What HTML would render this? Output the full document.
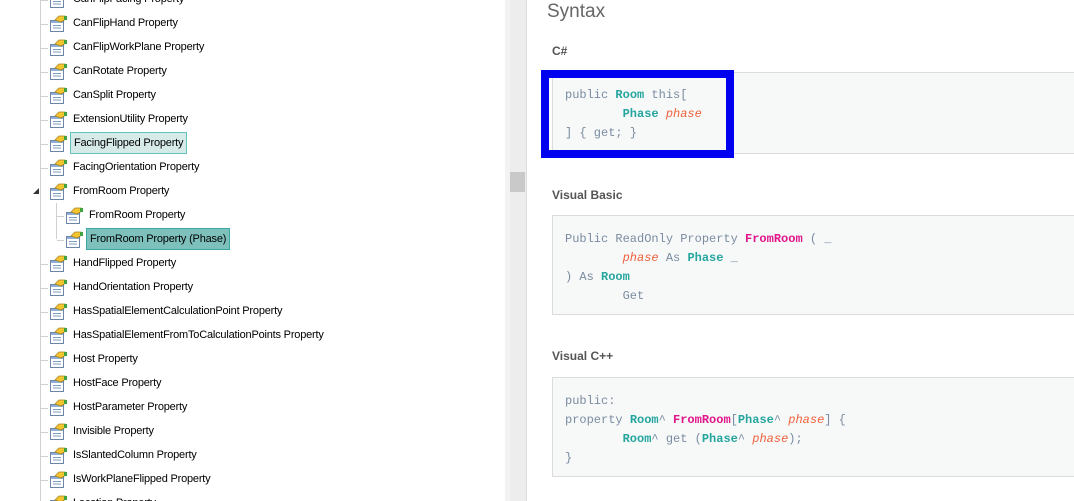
<!DOCTYPE html>
<html><head><meta charset="utf-8"><style>
*{margin:0;padding:0;box-sizing:border-box}
html,body{width:1074px;height:501px;overflow:hidden}
body{background:#fff;position:relative;font-family:"Liberation Sans",sans-serif}
.row{position:absolute;height:24px;font-size:11px;letter-spacing:-0.2px;color:#000;line-height:24px;white-space:nowrap}
.ic{position:absolute;top:4px;width:18px;height:18px}
.t{position:absolute;top:0;padding:0 3px}
.hl1{background:#d6ebe8;border:1px solid #62c2bd;line-height:20px;top:1px}
.hl2{background:#7dc0bc;border:1px solid #3ba9a3;line-height:20px;top:1px}
.hline{position:absolute;height:1px;background:#d0d0d0}
.vline{position:absolute;width:1px;background:#d0d0d0}
.code{position:absolute;left:552px;width:540px;background:#f7f9f9;border:1px solid #dcdcdc;font-family:"Liberation Mono",monospace;font-size:12px;line-height:19px;color:#7a8ba0;padding:14px 12px;white-space:pre}
.k{color:#26a59f;font-weight:bold}
.p{color:#ee5f3a;font-style:italic}
.m{color:#e0168a;font-weight:bold}
.h{position:absolute;left:552px;font-size:12px;font-weight:bold;color:#555}
</style></head><body>
<div style="position:absolute;left:505px;top:0;width:5px;height:501px;background:#f3f3f3"></div>
<div style="position:absolute;left:510px;top:0;width:16px;height:501px;background:#ededed"></div>
<div style="position:absolute;left:510px;top:172px;width:15px;height:20px;background:#c9c9c9"></div>
<div style="position:absolute;left:526px;top:0;width:1px;height:501px;background:#dcdcdc"></div>

<svg width="0" height="0" style="position:absolute"><defs>
<g id="icon"><rect x="1.5" y="5.5" width="13" height="11" fill="#fff" stroke="#6d86a8"/><rect x="2" y="6" width="12" height="2" fill="#8fb0d6"/><line x1="4" y1="10.5" x2="12" y2="10.5" stroke="#7c9cc4"/><line x1="4" y1="13" x2="12" y2="13" stroke="#7c9cc4"/><path d="M6 5 L10 1 L16 1 L17 4 L12 7 Z" fill="#f2c531" stroke="#a8821a" stroke-width=".8"/><rect x="15" y="1" width="3" height="4" fill="#3fa33f"/></g>
</defs></svg>

<div id="tree"></div>
<script>
var items=[["CanFlipFacing Property",0],["CanFlipHand Property",0],["CanFlipWorkPlane Property",0],["CanRotate Property",0],["CanSplit Property",0],["ExtensionUtility Property",0],["FacingFlipped Property",0,1],["FacingOrientation Property",0],["FromRoom Property",0,0,1],["FromRoom Property",1],["FromRoom Property (Phase)",1,2],["HandFlipped Property",0],["HandOrientation Property",0],["HasSpatialElementCalculationPoint Property",0],["HasSpatialElementFromToCalculationPoints Property",0],["Host Property",0],["HostFace Property",0],["HostParameter Property",0],["Invisible Property",0],["IsSlantedColumn Property",0],["IsWorkPlaneFlipped Property",0],["Location Property",0]];
var h="";
h+='<div class="vline" style="left:40px;top:0;height:501px"></div>';
h+='<div class="vline" style="left:56px;top:203px;height:36px"></div>';
items.forEach(function(it,i){
 var y=i*24-13;var c=it[1];var ix=c?65:49;var tx=c?87:71;
 if(it[3]){h+='<div style="position:absolute;left:33px;top:'+(y+9)+'px;width:0;height:0;border-left:6px solid transparent;border-bottom:6px solid #333"></div>';}
 else if(c){h+='<div class="hline" style="left:57px;top:'+(y+13)+'px;width:7px"></div>';}
 else{h+='<div class="hline" style="left:41px;top:'+(y+13)+'px;width:7px"></div>';}
 h+='<div class="row" style="top:'+y+'px;left:0;width:505px"><svg class="ic" style="left:'+ix+'px" viewBox="0 0 18 18"><use href="#icon"/></svg><span class="t'+(it[2]==1?' hl1':it[2]==2?' hl2':'')+'" style="left:'+(tx-1)+'px">'+it[0]+'</span></div>';
});
document.getElementById('tree').innerHTML=h;
</script>

<div style="position:absolute;left:547px;top:0;font-size:19px;color:#666;line-height:24px">Syntax</div>
<div class="h" style="top:44px">C#</div>
<div class="code" style="top:72px;height:82px;padding-top:13px">public <span class="k">Room</span> this[
        <span class="k">Phase</span> <span class="p">phase</span>
] { get; }</div>
<div style="position:absolute;left:541px;top:70px;width:193px;height:88px;border:8px solid #0000f0"></div>
<div class="h" style="top:188px">Visual Basic</div>
<div class="code" style="top:215px;height:100px">Public ReadOnly Property <span class="m">FromRoom</span> ( _
        <span class="p">phase</span> As <span class="k">Phase</span> _
) As <span class="k">Room</span>
        Get</div>
<div class="h" style="top:349px">Visual C++</div>
<div class="code" style="top:377px;height:100px">public:
property <span class="k">Room</span>^ <span class="m">FromRoom</span>[<span class="k">Phase</span>^ <span class="p">phase</span>] {
        <span class="k">Room</span>^ get (<span class="k">Phase</span>^ <span class="p">phase</span>);
}</div>
</body></html>
